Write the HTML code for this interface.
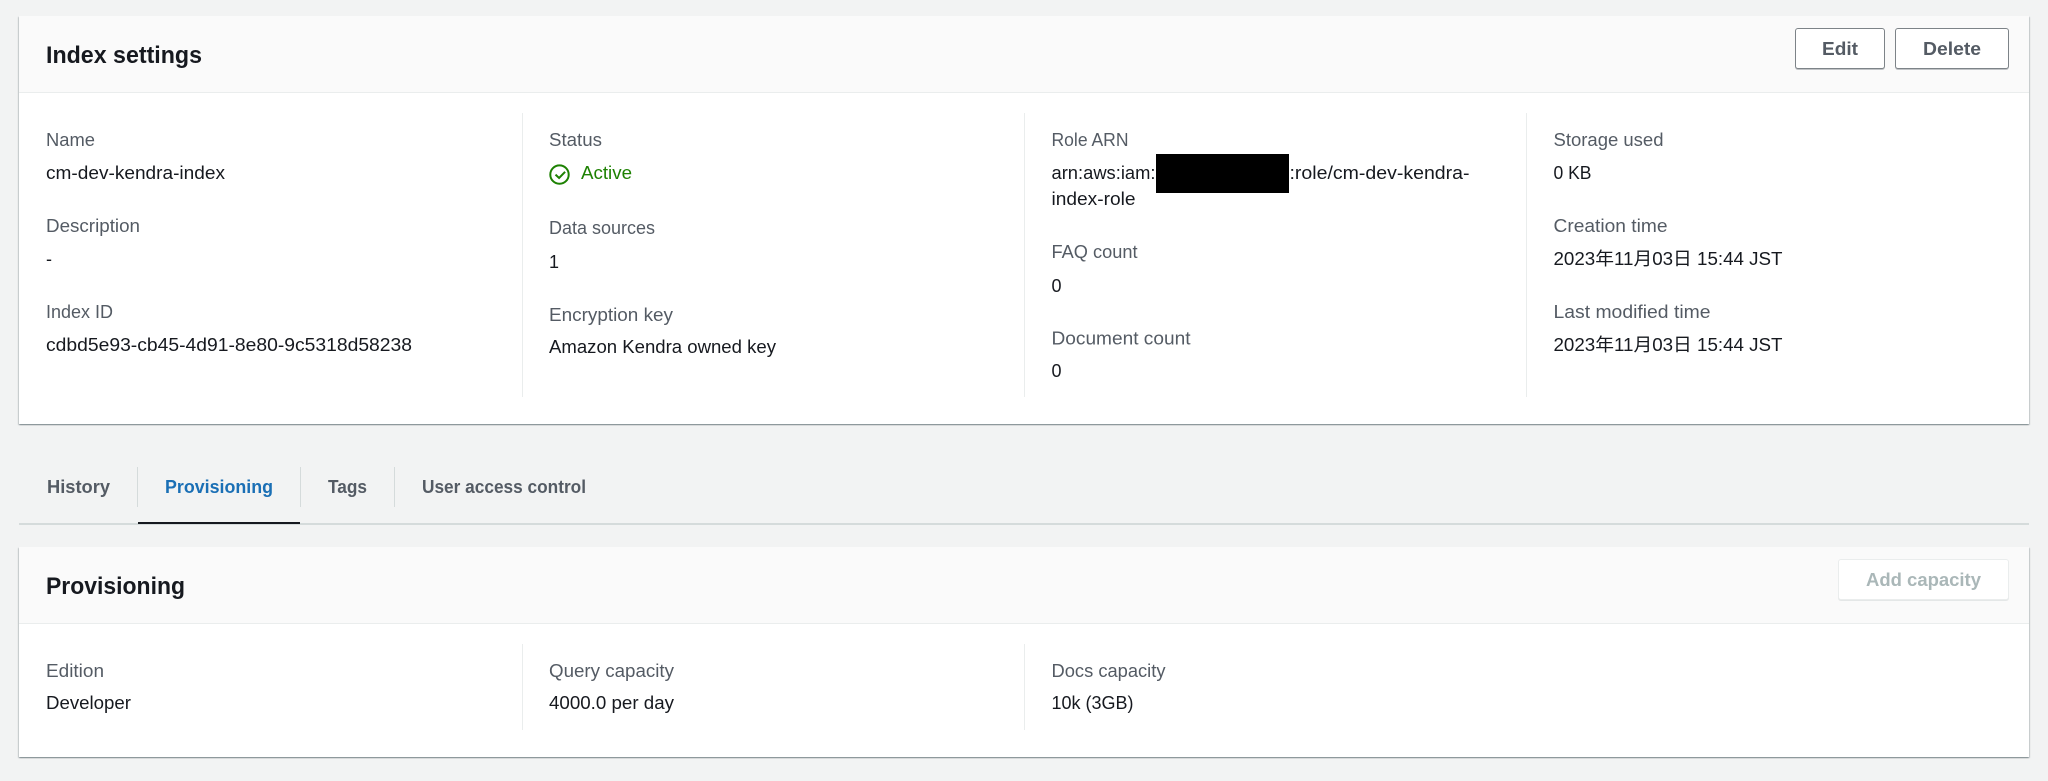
<!DOCTYPE html>
<html lang="en">
<head>
<meta charset="utf-8">
<title>Index settings</title>
<style>
html,body{margin:0;padding:0;width:2048px;height:781px;overflow:hidden;background:#f2f3f3;}
.abs{position:absolute;box-sizing:border-box;}
.card{background:#fff;left:19px;width:2010px;box-shadow:0 1px 1px 0 rgba(0,28,36,.3),1px 1px 1px 0 rgba(0,28,36,.15),-1px 1px 1px 0 rgba(0,28,36,.15);}
.head{left:0;top:0;width:100%;background:#fafafa;border-bottom:1px solid #eaeded;}
.vl{width:1px;background:#eaeded;}
.btn{background:#fff;border:1px solid #7d8388;border-radius:3px;box-shadow:0 1px 0 rgba(84,91,100,.35);}
.btn.dis{border-color:#eaeded;box-shadow:0 1px 0 rgba(213,219,219,.6);}
.tv{width:1px;background:#d5dbdb;top:467px;height:40px;}
svg{position:absolute;left:0;top:0;filter:blur(.3px);}
text{font-family:"Liberation Sans","Noto Sans CJK JP",sans-serif;font-size:18px;fill:#16191f;}
.l{fill:#545b64;}
.b{font-weight:700;}
.t{font-weight:700;font-size:24px;}
</style>
</head>
<body>
<div class="abs card" style="top:16px;height:408px;"><div class="abs head" style="height:77px;"></div></div>
<div class="abs vl" style="left:522px;top:113px;height:284px;"></div>
<div class="abs vl" style="left:1024px;top:113px;height:284px;"></div>
<div class="abs vl" style="left:1526px;top:113px;height:284px;"></div>
<div class="abs btn" style="left:1795px;top:28px;width:90px;height:41px;"></div>
<div class="abs btn" style="left:1895px;top:28px;width:114px;height:41px;"></div>

<div class="abs" style="left:19px;top:523px;width:2010px;height:2px;background:#d5dbdb;"></div>
<div class="abs" style="left:138px;top:522px;width:162px;height:2px;background:#16191f;"></div>
<div class="abs tv" style="left:137px;"></div>
<div class="abs tv" style="left:300px;"></div>
<div class="abs tv" style="left:394px;"></div>

<div class="abs card" style="top:547px;height:210px;"><div class="abs head" style="height:77px;"></div></div>
<div class="abs vl" style="left:522px;top:644px;height:86px;"></div>
<div class="abs vl" style="left:1024px;top:644px;height:86px;"></div>
<div class="abs btn dis" style="left:1838px;top:559px;width:171px;height:41px;"></div>

<svg width="2048" height="781" viewBox="0 0 2048 781">
<text class="t" x="46" y="63" textLength="156" lengthAdjust="spacingAndGlyphs">Index settings</text>
<text class="b l" x="1822" y="55" textLength="36" lengthAdjust="spacingAndGlyphs">Edit</text>
<text class="b l" x="1923" y="55" textLength="58" lengthAdjust="spacingAndGlyphs">Delete</text>

<text class="l" x="46" y="146" textLength="49" lengthAdjust="spacingAndGlyphs">Name</text>
<text x="46" y="179" textLength="179" lengthAdjust="spacingAndGlyphs">cm-dev-kendra-index</text>
<text class="l" x="46" y="232" textLength="94" lengthAdjust="spacingAndGlyphs">Description</text>
<text x="46" y="265" textLength="6" lengthAdjust="spacingAndGlyphs">-</text>
<text class="l" x="46" y="318" textLength="67" lengthAdjust="spacingAndGlyphs">Index ID</text>
<text x="46" y="351" textLength="366" lengthAdjust="spacingAndGlyphs">cdbd5e93-cb45-4d91-8e80-9c5318d58238</text>

<text class="l" x="549" y="146" textLength="53" lengthAdjust="spacingAndGlyphs">Status</text>
<circle cx="559.5" cy="174.6" r="9.2" fill="none" stroke="#1d8102" stroke-width="2"/>
<path d="M555.5 174.6l3.6 3.4 6-6.2" fill="none" stroke="#1d8102" stroke-width="2"/>
<text x="581" y="179" textLength="51" lengthAdjust="spacingAndGlyphs" style="fill:#1d8102">Active</text>
<text class="l" x="549" y="234" textLength="106" lengthAdjust="spacingAndGlyphs">Data sources</text>
<text x="549" y="268">1</text>
<text class="l" x="549" y="321" textLength="124" lengthAdjust="spacingAndGlyphs">Encryption key</text>
<text x="549" y="353" textLength="227" lengthAdjust="spacingAndGlyphs">Amazon Kendra owned key</text>

<text class="l" x="1051.5" y="146" textLength="77" lengthAdjust="spacingAndGlyphs">Role ARN</text>
<text x="1051.5" y="179" textLength="104" lengthAdjust="spacingAndGlyphs">arn:aws:iam:</text>
<text x="1289.5" y="179" textLength="180" lengthAdjust="spacingAndGlyphs">:role/cm-dev-kendra-</text>
<text x="1051.5" y="205" textLength="84" lengthAdjust="spacingAndGlyphs">index-role</text>
<text class="l" x="1051.5" y="258" textLength="86" lengthAdjust="spacingAndGlyphs">FAQ count</text>
<text x="1051.5" y="292">0</text>
<text class="l" x="1051.5" y="344.5" textLength="139" lengthAdjust="spacingAndGlyphs">Document count</text>
<text x="1051.5" y="377">0</text>

<text class="l" x="1553.5" y="146" textLength="110" lengthAdjust="spacingAndGlyphs">Storage used</text>
<text x="1553.5" y="179" textLength="38" lengthAdjust="spacingAndGlyphs">0 KB</text>
<text class="l" x="1553.5" y="232" textLength="114" lengthAdjust="spacingAndGlyphs">Creation time</text>
<text x="1553.5" y="265" textLength="229" lengthAdjust="spacingAndGlyphs">2023年11月03日 15:44 JST</text>
<text class="l" x="1553.5" y="318" textLength="157" lengthAdjust="spacingAndGlyphs">Last modified time</text>
<text x="1553.5" y="351" textLength="229" lengthAdjust="spacingAndGlyphs">2023年11月03日 15:44 JST</text>

<text class="b l" x="47" y="493" textLength="63" lengthAdjust="spacingAndGlyphs">History</text>
<text class="b" x="165" y="493" textLength="108" lengthAdjust="spacingAndGlyphs" style="fill:#1a6fb5">Provisioning</text>
<text class="b l" x="328" y="493" textLength="39" lengthAdjust="spacingAndGlyphs">Tags</text>
<text class="b l" x="422" y="493" textLength="164" lengthAdjust="spacingAndGlyphs">User access control</text>

<text class="t" x="46" y="594" textLength="139" lengthAdjust="spacingAndGlyphs">Provisioning</text>
<text class="b" x="1866" y="586" textLength="115" lengthAdjust="spacingAndGlyphs" style="fill:#aab7b8">Add capacity</text>

<text class="l" x="46" y="677" textLength="58" lengthAdjust="spacingAndGlyphs">Edition</text>
<text x="46" y="709" textLength="85" lengthAdjust="spacingAndGlyphs">Developer</text>
<text class="l" x="549" y="677" textLength="125" lengthAdjust="spacingAndGlyphs">Query capacity</text>
<text x="549" y="709" textLength="125" lengthAdjust="spacingAndGlyphs">4000.0 per day</text>
<text class="l" x="1051.5" y="677" textLength="114" lengthAdjust="spacingAndGlyphs">Docs capacity</text>
<text x="1051.5" y="709" textLength="82" lengthAdjust="spacingAndGlyphs">10k (3GB)</text>
<rect x="1156" y="154" width="133" height="39" fill="#000"/>
</svg>
</body>
</html>
